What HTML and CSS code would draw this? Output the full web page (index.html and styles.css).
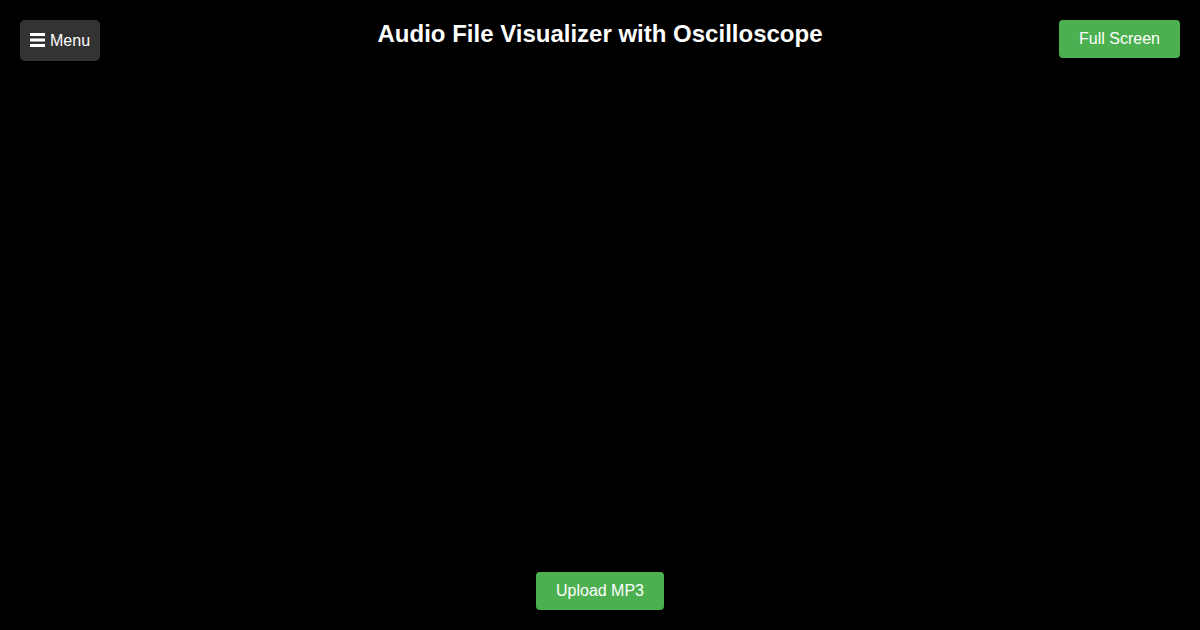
FILE: index.html
```html
<!DOCTYPE html>
<html lang="en">
<head>
  <meta charset="UTF-8" />
  <title>Audio File Visualizer with Oscilloscope</title>
  <link rel="stylesheet" href="styles.css">
</head>
<body>

<div class="page">
  <header class="topbar">
    <div class="left">
      <button class="menu-btn"><svg class="bars" width="15" height="14" viewBox="0 0 15 14">
          <rect x="0" y="0" width="15" height="3" fill="currentColor" />
          <rect x="0" y="5.5" width="15" height="3" fill="currentColor" />
          <rect x="0" y="11" width="15" height="3" fill="currentColor" />
        </svg>Menu</button>
    </div>
    <h1>Audio File Visualizer with Oscilloscope</h1>
    <div class="right">
      <button class="green-btn">Full Screen</button>
    </div>
  </header>

  <canvas class="scope"></canvas>

  <div class="controls">
    <label class="green-btn">Upload MP3<input type="file" accept="audio/mp3" hidden /></label>
  </div>
</div>

</body>
</html>
```

FILE: styles.css
```css
html, body {
  margin: 0;
  height: 100%;
  background: #000;
  color: white;
  font-family: "Liberation Sans", Arial, sans-serif;
}
.page {
  height: 100%;
  display: flex;
  flex-direction: column;
}
.topbar {
  display: grid;
  grid-template-columns: 1fr auto 1fr;
  align-items: start;
  padding: 20px 20px 0;
}
.topbar h1 {
  margin: 0;
  font-size: 24px;
  font-weight: bold;
}
.right {
  display: flex;
  justify-content: flex-end;
}
.menu-btn {
  background: #333;
  color: white;
  border: none;
  border-radius: 5px;
  padding: 10px;
  font-family: "Liberation Sans", Arial, sans-serif;
  font-size: 16px;
  line-height: 21px;
  cursor: pointer;
}
.menu-btn .bars {
  margin-right: 5px;
  vertical-align: -1px;
}
.green-btn {
  display: inline-block;
  background: #4CAF50;
  color: white;
  border: none;
  border-radius: 4px;
  padding: 10px 20px;
  font-family: "Liberation Sans", Arial, sans-serif;
  font-size: 16px;
  line-height: 18px;
  cursor: pointer;
}
.scope {
  flex: 1;
  width: 100%;
  min-height: 0;
  display: block;
}
.controls {
  display: flex;
  justify-content: center;
  padding-bottom: 20px;
}
```
